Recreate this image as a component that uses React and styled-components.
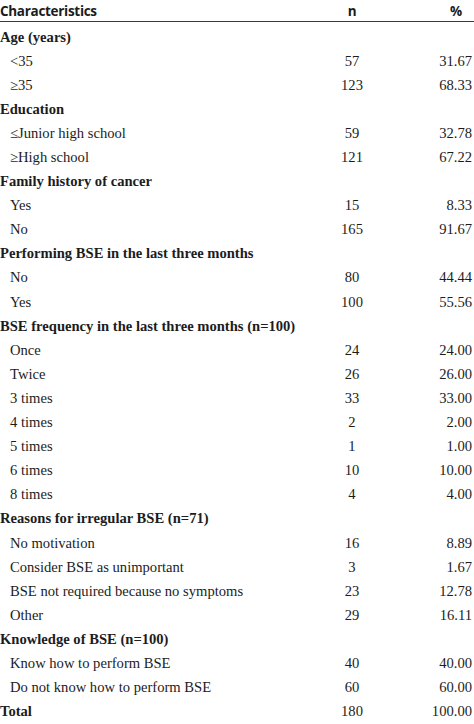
import React from "react";
import styled, { createGlobalStyle } from "styled-components";

const Global = createGlobalStyle`
  html, body {
    margin: 0;
    padding: 0;
    background: #fff;
  }
`;

const Table = styled.div`
  width: 474px;
  height: 724px;
  overflow: hidden;
  background: #fff;
  color: #1c1c1c;
`;

const Grid = styled.div`
  display: grid;
  grid-template-columns: 302px 100px 70px;
`;

const Head = styled(Grid)`
  height: 21px;
  align-items: center;
  border-bottom: 1.5px solid #3a3a3a;
  font-family: "Open Sans", "Liberation Sans", sans-serif;
  font-weight: 700;
  font-size: 13.5px;
  letter-spacing: -0.3px;
  margin-bottom: 3px;
`;

const Row = styled(Grid)`
  height: 24.1px;
  align-items: center;
  font-family: "Liberation Serif", "DejaVu Serif", serif;
  font-size: 14.6px;
  font-weight: ${(p) => (p.bold ? 700 : 400)};
  white-space: nowrap;
`;

const Label = styled.div`
  padding-left: ${(p) => (p.indent ? "10px" : "0")};
`;

const Num = styled.div`
  text-align: center;
`;

const Pct = styled.div`
  text-align: ${(p) => (p.head ? "center" : "right")};
  padding-left: ${(p) => (p.head ? "36px" : "0")};
  padding-right: ${(p) => (p.head ? "0" : "0")};
  width: ${(p) => (p.head ? "36px" : "70px")};
`;

const rows = [
  { h: "Age (years)" },
  { l: "<35", n: 57, p: "31.67" },
  { l: "≥35", n: 123, p: "68.33" },
  { h: "Education" },
  { l: "≤Junior high school", n: 59, p: "32.78" },
  { l: "≥High school", n: 121, p: "67.22" },
  { h: "Family history of cancer" },
  { l: "Yes", n: 15, p: "8.33" },
  { l: "No", n: 165, p: "91.67" },
  { h: "Performing BSE in the last three months" },
  { l: "No", n: 80, p: "44.44" },
  { l: "Yes", n: 100, p: "55.56" },
  { h: "BSE frequency in the last three months (n=100)" },
  { l: "Once", n: 24, p: "24.00" },
  { l: "Twice", n: 26, p: "26.00" },
  { l: "3 times", n: 33, p: "33.00" },
  { l: "4 times", n: 2, p: "2.00" },
  { l: "5 times", n: 1, p: "1.00" },
  { l: "6 times", n: 10, p: "10.00" },
  { l: "8 times", n: 4, p: "4.00" },
  { h: "Reasons for irregular BSE (n=71)" },
  { l: "No motivation", n: 16, p: "8.89" },
  { l: "Consider BSE as unimportant", n: 3, p: "1.67" },
  { l: "BSE not required because no symptoms", n: 23, p: "12.78" },
  { l: "Other", n: 29, p: "16.11" },
  { h: "Knowledge of BSE (n=100)" },
  { l: "Know how to perform BSE", n: 40, p: "40.00" },
  { l: "Do not know how to perform BSE", n: 60, p: "60.00" },
];

export default function App() {
  return (
    <>
      <Global />
      <Table>
        <Head>
          <Label>Characteristics</Label>
          <Num>n</Num>
          <Pct head>%</Pct>
        </Head>
        {rows.map((r, i) =>
          r.h ? (
            <Row key={i} bold>
              <Label>{r.h}</Label>
            </Row>
          ) : (
            <Row key={i}>
              <Label indent>{r.l}</Label>
              <Num>{r.n}</Num>
              <Pct>{r.p}</Pct>
            </Row>
          )
        )}
        <Row>
          <Label as="b">Total</Label>
          <Num>180</Num>
          <Pct>100.00</Pct>
        </Row>
      </Table>
    </>
  );
}
